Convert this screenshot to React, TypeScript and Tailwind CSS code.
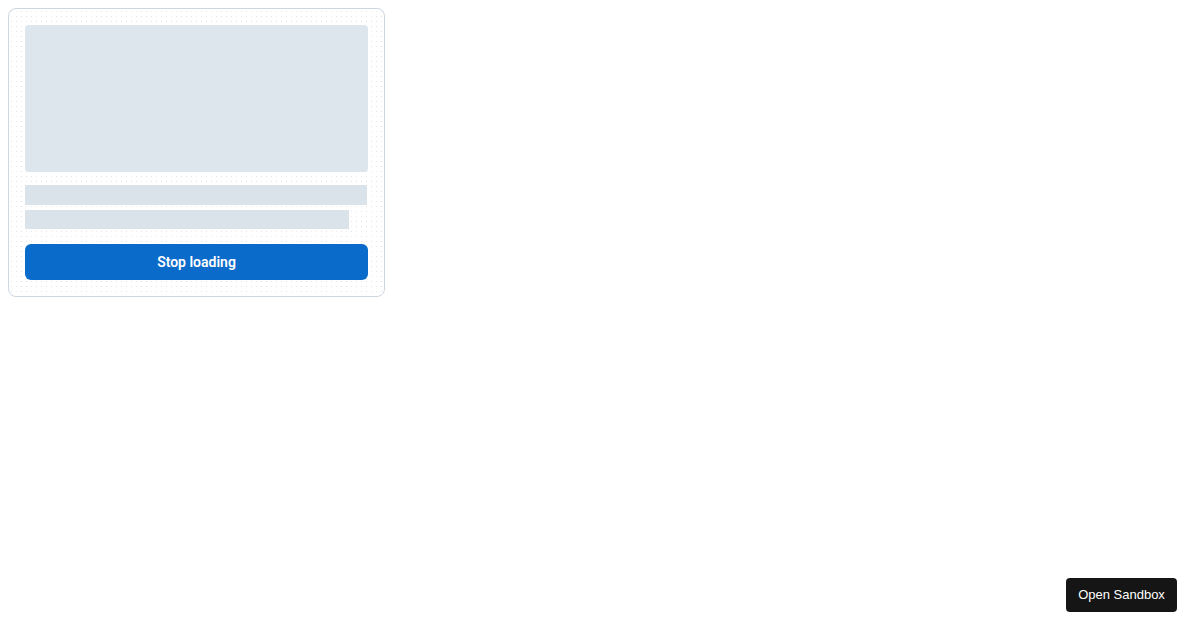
import React from 'react';

export default function App() {
  return (
    <div className="min-h-[630px] w-full bg-white p-2 font-['Roboto',sans-serif]">
      <div className="w-[377px] rounded-lg border border-[#cdd7e1] bg-white bg-[radial-gradient(#e3e8ee_0.6px,transparent_0.7px)] bg-[size:5px_5px] p-4">
        <div className="h-[147px] rounded-[4px] bg-[#dde5ed]" />
        <div className="mt-[13px] h-5 w-[342px] bg-[#dae2ea]" />
        <div className="mt-[5px] h-[19px] w-[324px] bg-[#dae2ea]" />
        <button className="mt-[15px] flex h-9 w-full items-center justify-center rounded-md bg-[#0b6bcb] text-sm font-semibold text-white">
          Stop loading
        </button>
      </div>
      <button className="fixed bottom-[18px] right-[23px] h-[34px] w-[111px] rounded-[4px] bg-[#151515] font-['Liberation_Sans',sans-serif] text-[13px] text-white">
        Open Sandbox
      </button>
    </div>
  );
}
